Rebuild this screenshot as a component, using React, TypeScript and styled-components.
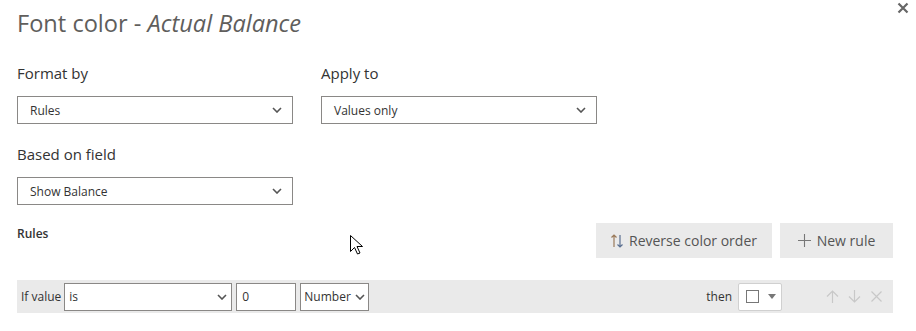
import React from 'react';
import styled, { createGlobalStyle } from 'styled-components';

const GlobalStyle = createGlobalStyle`
    html, body {
        margin: 0;
        padding: 0;
        background: #ffffff;
        font-family: 'Open Sans', 'Noto Sans', sans-serif;
    }
`;

const COLORS = {
    text: '#333333',
    title: '#605e5c',
    border: '#8a8886',
    band: '#eaeaea',
    faint: '#c8c8c8',
};

const Dialog = styled.div`
    position: relative;
    width: 916px;
    height: 331px;
    box-sizing: border-box;
    padding: 7px 23px 0 17px;
    overflow: hidden;
`;

const Header = styled.div`
    display: flex;
    justify-content: space-between;
    align-items: flex-start;
`;

const Title = styled.h1`
    margin: 0;
    font-size: 23.6px;
    line-height: 32px;
    font-weight: 400;
    color: ${COLORS.title};
    & > em {
        font-style: italic;
    }
`;

const CloseButton = styled.button`
    margin: -5px -16px 0 0;
    padding: 0;
    border: 0;
    background: none;
    width: 12px;
    height: 12px;
    display: flex;
    & > svg {
        width: 12px;
        height: 12px;
    }
`;

const FieldGrid = styled.div`
    display: grid;
    grid-template-columns: 276px 276px;
    column-gap: 28px;
    row-gap: 20px;
    margin-top: 24px;
`;

const Field = styled.div`
    display: flex;
    flex-direction: column;
`;

const Label = styled.label`
    font-size: 15px;
    line-height: 20px;
    color: ${COLORS.text};
    margin-bottom: 13px;
`;

const SelectBox = styled.div<{ $width?: number; $gap?: number }>`
    display: flex;
    align-items: center;
    justify-content: space-between;
    box-sizing: border-box;
    width: ${(p) => (p.$width ? `${p.$width}px` : '100%')};
    height: 28px;
    padding: 0 ${(p) => p.$gap ?? 10}px 0 ${(p) => p.$gap ?? 12}px;
    border: 1px solid ${COLORS.border};
    background: #ffffff;
    font-size: 12px;
    color: ${COLORS.text};
`;

const Chevron = () => (
    <svg width="10" height="6" viewBox="0 0 10 6">
        <path d="M1 1 L5 5 L9 1" fill="none" stroke="#555" strokeWidth="1.6" />
    </svg>
);

const RulesHeader = styled.div`
    display: flex;
    justify-content: space-between;
    align-items: flex-start;
    margin-top: 18px;
`;

const SectionTitle = styled.div`
    font-size: 12px;
    font-weight: 600;
    color: ${COLORS.text};
    padding-top: 2px;
`;

const ButtonGroup = styled.div`
    display: flex;
    gap: 8px;
`;

const ActionButton = styled.button<{ $width: number }>`
    display: flex;
    align-items: center;
    justify-content: center;
    gap: 6px;
    width: ${(p) => p.$width}px;
    height: 35px;
    border: 0;
    background: ${COLORS.band};
    font-family: inherit;
    font-size: 14px;
    color: #555555;
    padding: 0;
`;

const RuleRow = styled.div`
    display: flex;
    align-items: center;
    height: 33px;
    margin-top: 22px;
    padding: 0 10px 0 4px;
    background: ${COLORS.band};
    gap: 4px;
`;

const RowText = styled.span`
    font-size: 12px;
    color: ${COLORS.text};
    margin-right: -1px;
`;

const NumberInput = styled.div`
    box-sizing: border-box;
    width: 60px;
    height: 28px;
    border: 1px solid ${COLORS.border};
    background: #ffffff;
    font-size: 12px;
    color: ${COLORS.text};
    display: flex;
    align-items: center;
    padding-left: 5px;
`;

const Spacer = styled.div`
    flex: 1;
`;

const ColorPicker = styled.div`
    display: flex;
    align-items: center;
    gap: 9px;
    box-sizing: border-box;
    width: 44px;
    height: 28px;
    margin: 0 40px 0 3px;
    padding-left: 7px;
    border: 1px solid #d0d0d0;
    border-radius: 2px;
    background: #ffffff;
`;

const Swatch = styled.div`
    width: 13px;
    height: 13px;
    box-sizing: border-box;
    border: 1px solid #777777;
    background: #ffffff;
`;

const RowActions = styled.div`
    display: flex;
    gap: 9px;
    & > svg {
        width: 13px;
        height: 13px;
    }
`;

const Cursor = styled.svg`
    position: absolute;
    left: 350px;
    top: 235px;
    width: 13px;
    height: 20px;
`;

const App = (): JSX.Element => {
    return (
        <>
            <GlobalStyle />
            <Dialog>
                <Header>
                    <Title>
                        Font color - <em>Actual Balance</em>
                    </Title>
                    <CloseButton aria-label="Close">
                        <svg viewBox="0 0 12 12">
                            <path d="M1.5 1.5 L10.5 10.5 M10.5 1.5 L1.5 10.5" stroke="#666" strokeWidth="2.2" />
                        </svg>
                    </CloseButton>
                </Header>

                <FieldGrid>
                    <Field>
                        <Label>Format by</Label>
                        <SelectBox>
                            Rules
                            <Chevron />
                        </SelectBox>
                    </Field>
                    <Field>
                        <Label>Apply to</Label>
                        <SelectBox>
                            Values only
                            <Chevron />
                        </SelectBox>
                    </Field>
                    <Field>
                        <Label>Based on field</Label>
                        <SelectBox>
                            Show Balance
                            <Chevron />
                        </SelectBox>
                    </Field>
                </FieldGrid>

                <RulesHeader>
                    <SectionTitle>Rules</SectionTitle>
                    <ButtonGroup>
                        <ActionButton $width={176}>
                            <svg width="12" height="14" viewBox="0 0 12 14">
                                <path d="M3 13 V1 M0.5 3.5 L3 1 L5.5 3.5" fill="none" stroke="#9a7a5a" strokeWidth="1.2" />
                                <path d="M9 1 V13 M6.5 10.5 L9 13 L11.5 10.5" fill="none" stroke="#5a6f90" strokeWidth="1.2" />
                            </svg>
                            Reverse color order
                        </ActionButton>
                        <ActionButton $width={113}>
                            <svg width="13" height="13" viewBox="0 0 13 13">
                                <path d="M6.5 0 V13 M0 6.5 H13" stroke="#777" strokeWidth="1.1" />
                            </svg>
                            New rule
                        </ActionButton>
                    </ButtonGroup>
                </RulesHeader>

                <RuleRow>
                    <RowText>If value</RowText>
                    <SelectBox $width={168} $gap={4}>
                        is
                        <Chevron />
                    </SelectBox>
                    <NumberInput>0</NumberInput>
                    <SelectBox $width={69} $gap={3}>
                        Number
                        <Chevron />
                    </SelectBox>
                    <Spacer />
                    <RowText>then</RowText>
                    <ColorPicker>
                        <Swatch />
                        <svg width="8" height="5" viewBox="0 0 8 5">
                            <path d="M0 0 H8 L4 5 Z" fill="#777" />
                        </svg>
                    </ColorPicker>
                    <RowActions>
                        <svg viewBox="0 0 13 13">
                            <path d="M6.5 13 V1 M1 6.5 L6.5 1 L12 6.5" fill="none" stroke={COLORS.faint} strokeWidth="1.2" />
                        </svg>
                        <svg viewBox="0 0 13 13">
                            <path d="M6.5 0 V12 M1 6.5 L6.5 12 L12 6.5" fill="none" stroke={COLORS.faint} strokeWidth="1.2" />
                        </svg>
                        <svg viewBox="0 0 13 13">
                            <path d="M1.5 1.5 L11.5 11.5 M11.5 1.5 L1.5 11.5" fill="none" stroke={COLORS.faint} strokeWidth="1.2" />
                        </svg>
                    </RowActions>
                </RuleRow>

                <Cursor viewBox="0 0 13 20">
                    <path d="M0.5 0.5 V16.5 L4.5 12.5 L7.5 19 L10 18 L7 11.5 H12.5 Z" fill="#fff" stroke="#000" strokeWidth="1" />
                </Cursor>
            </Dialog>
        </>
    );
};

export default App;
